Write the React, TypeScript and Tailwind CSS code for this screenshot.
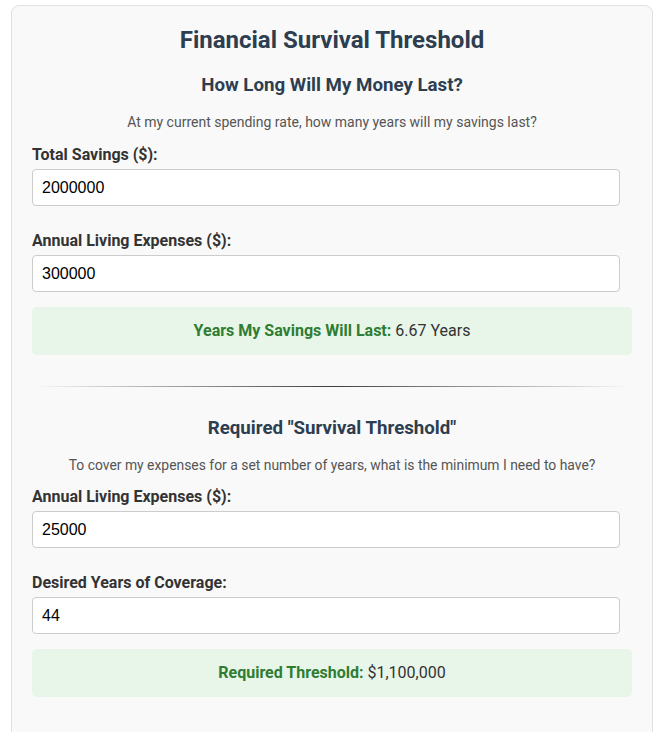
import React, { useState } from 'react';

const font = { fontFamily: 'Roboto, "Liberation Sans", sans-serif' };

function Field({
  label,
  value,
  onChange,
}: {
  label: string;
  value: string;
  onChange: (v: string) => void;
}) {
  return (
    <div className="mb-[15px]">
      <label className="block text-[16px] leading-[19px] font-bold text-[#333] mb-[5px]">
        {label}
      </label>
      <input
        type="number"
        value={value}
        onChange={(e) => onChange(e.target.value)}
        className="block w-[588px] h-[37px] px-[9px] bg-white border border-[#ccc] rounded-[4px] text-[16px] text-black outline-none [font-family:'Liberation_Sans',Arial,sans-serif]"
      />
    </div>
  );
}

function Result({ label, value }: { label: string; value: string }) {
  return (
    <div className="flex items-center justify-center h-[48px] bg-[#e8f5e9] rounded-[5px] text-[16px] text-[#333]">
      <span className="font-bold text-[#2e7d32]">{label}</span>
      <span>&nbsp;{value}</span>
    </div>
  );
}

export default function App() {
  const [savings, setSavings] = useState('2000000');
  const [expenses, setExpenses] = useState('300000');
  const [expenses2, setExpenses2] = useState('25000');
  const [years, setYears] = useState('44');

  const yearsLast =
    Number(expenses) > 0 ? (Number(savings) / Number(expenses)).toFixed(2) : '0';
  const threshold = Number(expenses2) * Number(years);

  return (
    <div className="w-full" style={font}>
      <div className="w-[642px] ml-[11px] mt-[5px] bg-[#f9f9f9] border border-[#e0e0e0] rounded-[8px] px-[20px] pt-[20px] pb-[40px]">
        <h1 className="text-center text-[24px] leading-[28px] font-bold text-[#2c3e50]">
          Financial Survival Threshold
        </h1>

        <h2 className="mt-[20px] text-center text-[18.7px] leading-[22px] font-bold text-[#2c3e50]">
          How Long Will My Money Last?
        </h2>
        <p className="mt-[18px] text-center text-[14px] leading-[17px] text-[#555]">
          At my current spending rate, how many years will my savings last?
        </p>
        <div className="mt-[14px]">
          <Field label="Total Savings ($):" value={savings} onChange={setSavings} />
          <div className="h-[10px]" />
          <Field label="Annual Living Expenses ($):" value={expenses} onChange={setExpenses} />
          <Result label="Years My Savings Will Last:" value={`${yearsLast} Years`} />
        </div>

        <hr className="mt-[31px] h-px border-0 bg-[linear-gradient(to_right,rgba(0,0,0,0),rgba(0,0,0,0.75),rgba(0,0,0,0))]" />

        <h2 className="mt-[30px] text-center text-[18.7px] leading-[22px] font-bold text-[#2c3e50]">
          Required "Survival Threshold"
        </h2>
        <p className="mt-[18px] text-center text-[13.9px] leading-[17px] text-[#555]">
          To cover my expenses for a set number of years, what is the minimum I need to have?
        </p>
        <div className="mt-[13px]">
          <Field label="Annual Living Expenses ($):" value={expenses2} onChange={setExpenses2} />
          <div className="h-[10px]" />
          <Field label="Desired Years of Coverage:" value={years} onChange={setYears} />
          <Result
            label="Required Threshold:"
            value={`$${threshold.toLocaleString('en-US')}`}
          />
        </div>
      </div>
    </div>
  );
}
